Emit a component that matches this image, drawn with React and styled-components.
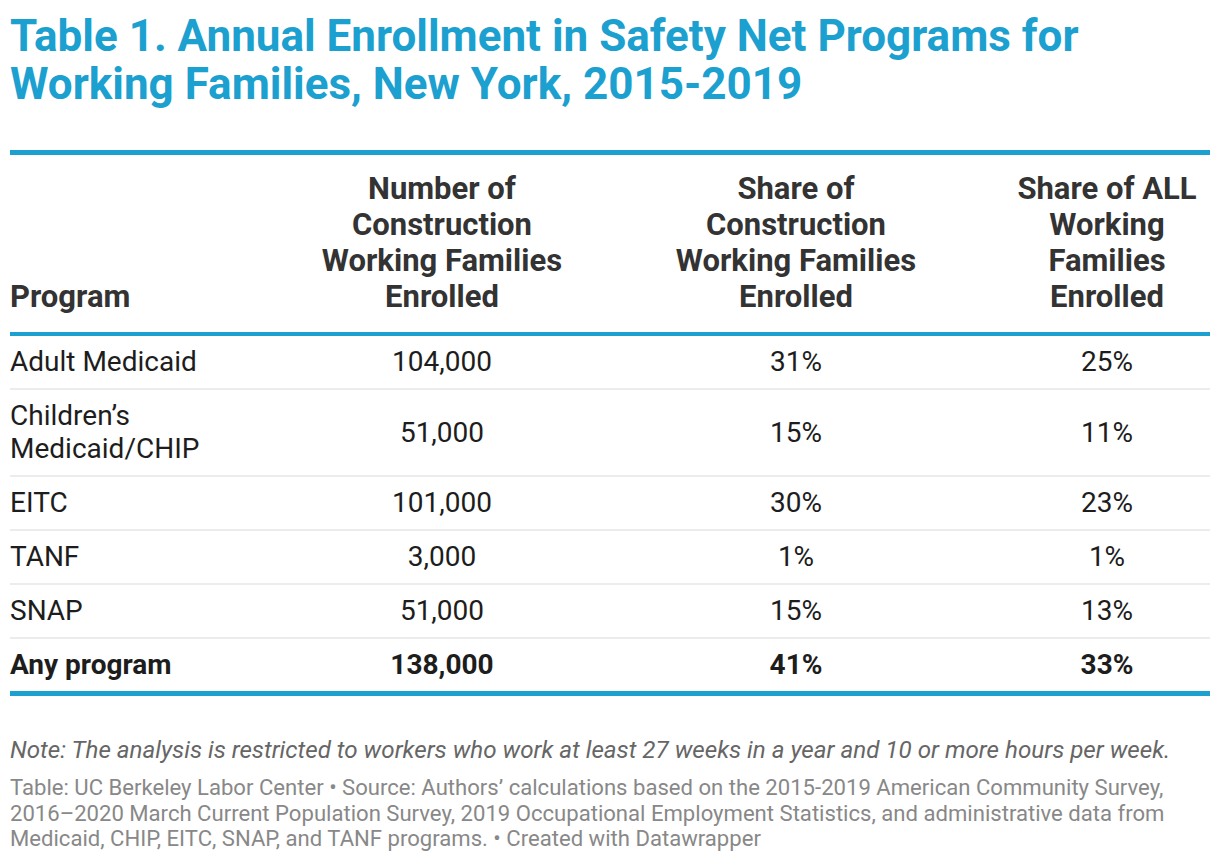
import React from 'react';
import styled, { createGlobalStyle } from 'styled-components';

const rows = [
  { program: ['Adult Medicaid'], count: '104,000', share: '31%', all: '25%' },
  { program: ['Children’s', 'Medicaid/CHIP'], count: '51,000', share: '15%', all: '11%' },
  { program: ['EITC'], count: '101,000', share: '30%', all: '23%' },
  { program: ['TANF'], count: '3,000', share: '1%', all: '1%' },
  { program: ['SNAP'], count: '51,000', share: '15%', all: '13%' },
  { program: ['Any program'], count: '138,000', share: '41%', all: '33%', total: true },
];

const headers = [
  ['Program'],
  ['Number of', 'Construction', 'Working Families', 'Enrolled'],
  ['Share of', 'Construction', 'Working Families', 'Enrolled'],
  ['Share of ALL', 'Working', 'Families', 'Enrolled'],
];

const lines = (parts) =>
  parts.map((p, i) => (
    <React.Fragment key={p}>
      {i > 0 && <br />}
      {p}
    </React.Fragment>
  ));

export default function App() {
  return (
    <>
      <GlobalStyle />
      <Page>
        <Title>
          Table 1. Annual Enrollment in Safety Net Programs for Working Families, New York,
          2015-2019
        </Title>
        <Table>
          <Head>
            {headers.map((h, i) => (
              <HeadCell key={i} center={i > 0}>
                {lines(h)}
              </HeadCell>
            ))}
          </Head>
          {rows.map((r, i) => (
            <Row key={r.count + i} last={i === rows.length - 1}>
              <Cell bold={r.total}>{lines(r.program)}</Cell>
              <Cell center bold={r.total}>{r.count}</Cell>
              <Cell center bold={r.total}>{r.share}</Cell>
              <Cell center bold={r.total}>{r.all}</Cell>
            </Row>
          ))}
        </Table>
        <Footer>
          <Note>
            Note: The analysis is restricted to workers who work at least 27 weeks in a year and
            10 or more hours per week.
          </Note>
          <Source>
            Table: UC Berkeley Labor Center • Source: Authors’ calculations based on the 2015-2019
            American Community Survey, 2016–2020 March Current Population Survey, 2019
            Occupational Employment Statistics, and administrative data from Medicaid, CHIP, EITC,
            SNAP, and TANF programs. • Created with Datawrapper
          </Source>
        </Footer>
      </Page>
    </>
  );
}

const GlobalStyle = createGlobalStyle`
  body {
    margin: 0;
    background: #fff;
    font-family: Roboto, "Liberation Sans", sans-serif;
  }
`;

const Page = styled.div`
  padding: 12px 10px 0 10px;
  width: 1200px;
`;

const Title = styled.h1`
  margin: 0;
  color: #1ba0cf;
  font-size: 44px;
  line-height: 48px;
  font-weight: 700;
  max-width: 1120px;
`;

const Table = styled.div`
  margin-top: 42px;
  border-top: 5px solid #1ba0cf;
  border-bottom: 5px solid #1ba0cf;
`;

const grid = `
  display: grid;
  grid-template-columns: 286px 292px 416px 206px;
  align-items: center;
`;

const Head = styled.div`
  ${grid}
  align-items: end;
  padding: 16px 0 17px;
  border-bottom: 4px solid #1ba0cf;
`;

const HeadCell = styled.div`
  font-size: 31px;
  line-height: 36px;
  font-weight: 700;
  color: #333;
  white-space: nowrap;
  text-align: ${(p) => (p.center ? 'center' : 'left')};
`;

const Row = styled.div`
  ${grid}
  border-bottom: ${(p) => (p.last ? 'none' : '2px solid #ececec')};
`;

const Cell = styled.div`
  padding: 9px 0 10px;
  font-size: 28px;
  line-height: 33px;
  color: #1d1d1d;
  font-weight: ${(p) => (p.bold ? 700 : 400)};
  text-align: ${(p) => (p.center ? 'center' : 'left')};
`;

const Footer = styled.div`
  margin-top: 40px;
`;

const Note = styled.div`
  font-size: 24.2px;
  line-height: 28px;
  font-style: italic;
  color: #666;
`;

const Source = styled.div`
  margin-top: 11px;
  font-size: 22.1px;
  line-height: 25.5px;
  color: #888;
`;
